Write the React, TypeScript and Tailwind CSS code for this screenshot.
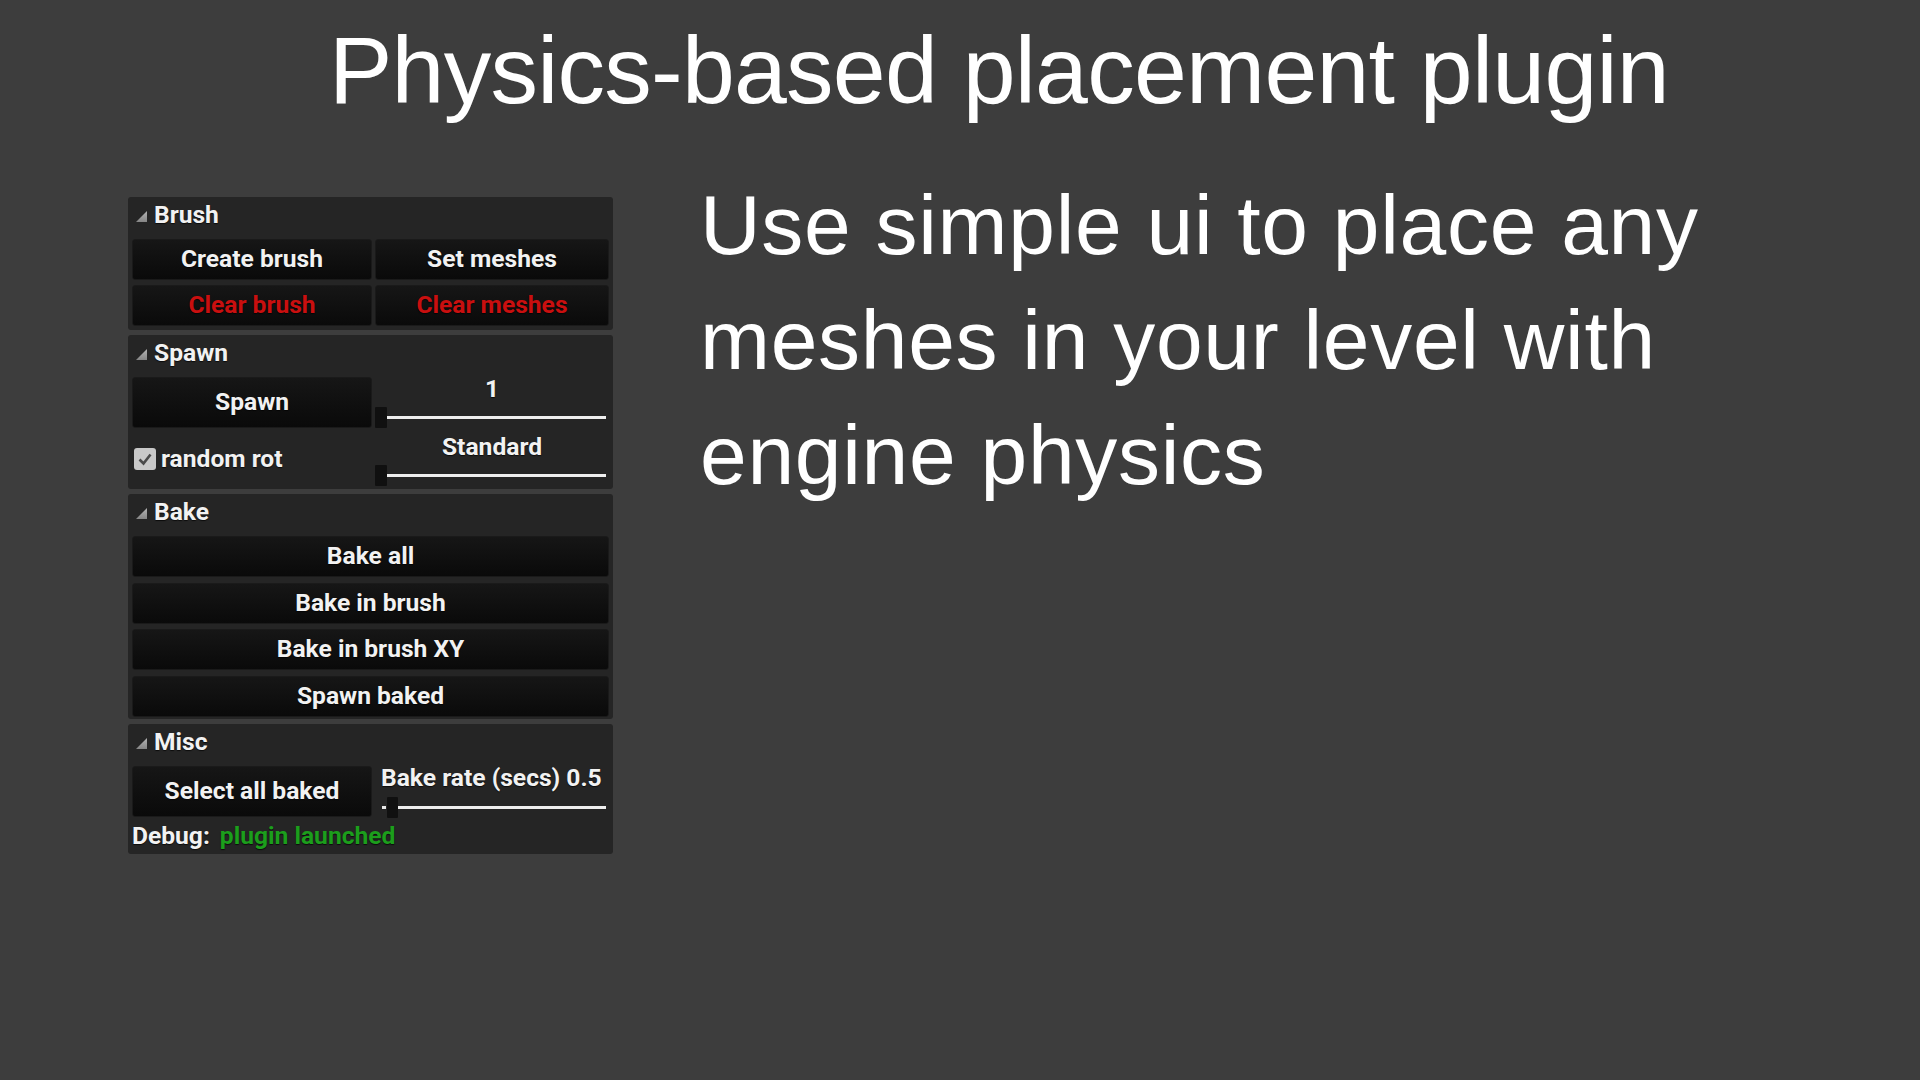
// Slide: plugin panel on the left, pitch text on the right.
import type { ReactNode } from "react";

function Cabecalho({ titulo }: { titulo: string }) {
  return (
    <div className="flex h-[42px] items-start gap-[7px] pl-[8px] pt-[4px]">
      <svg width="11" height="11" viewBox="0 0 11 11" className="mt-[10px] shrink-0">
        <defs>
          <linearGradient id="tri" x1="0" y1="0" x2="0" y2="1">
            <stop offset="0" stopColor="#b4b4b4" />
            <stop offset="1" stopColor="#858585" />
          </linearGradient>
        </defs>
        <polygon points="11,0 11,11 0,11" fill="url(#tri)" />
      </svg>
      <span className="leading-[28px]">{titulo}</span>
    </div>
  );
}

function Botao({ children, vermelho, alto }: { children: ReactNode; vermelho?: boolean; alto?: boolean }) {
  return (
    <div
      className={`flex items-center justify-center rounded-[3px] border border-[#1a1a1a] bg-linear-to-b from-[#161616] to-[#0a0a0a] ${
        alto ? "h-[51px]" : "h-[41px]"
      } ${vermelho ? "text-[#c90f0f]" : "text-[#f2f2f2]"}`}
    >
      {children}
    </div>
  );
}

function Deslizador({ traco }: { traco?: boolean }) {
  return (
    <div className="flex h-[21px] items-center pr-[3px]">
      {traco && <div className="mr-[1px] h-[3px] w-[4px] bg-[#e8e8e8]" />}
      <div className={`h-full shrink-0 rounded-[1px] bg-[#101010] ${traco ? "w-[11px]" : "w-[12px]"}`} />
      <div className="h-[3px] flex-1 bg-[#eeeeee]" />
    </div>
  );
}

export default function App() {
  return (
    <div className="h-[1080px] w-[1920px] overflow-hidden bg-[#3d3d3d] font-['Liberation_Sans',Arial,sans-serif] text-white">
      <h1 className="pl-[329px] pt-[23px] text-[95px] font-normal leading-[95px] tracking-[-0.75px]">
        Physics-based placement plugin
      </h1>

      <div className="mt-[50px] flex items-start pl-[128px]">
        {/* painel do plugin */}
        <div className="mt-[29px] flex w-[485px] flex-col gap-[5px] font-['Roboto',sans-serif] text-[24.6px] font-bold text-[#f2f2f2] [text-shadow:0_1px_1px_rgba(0,0,0,0.7)]">
          <section className="rounded-[3px] bg-[#252525] px-[4px] pb-[4px]">
            <div className="-mx-[4px]">
              <Cabecalho titulo="Brush" />
            </div>
            <div className="grid grid-cols-[240px_1fr] gap-x-[3px] gap-y-[5px]">
              <Botao>Create brush</Botao>
              <Botao>Set meshes</Botao>
              <Botao vermelho>Clear brush</Botao>
              <Botao vermelho>Clear meshes</Botao>
            </div>
          </section>

          <section className="rounded-[3px] bg-[#252525] px-[4px] pb-[3px]">
            <div className="-mx-[4px]">
              <Cabecalho titulo="Spawn" />
            </div>
            <div className="grid grid-cols-[240px_1fr] gap-x-[3px]">
              <div>
                <Botao alto>Spawn</Botao>
                <label className="ml-[2px] mt-[20px] flex h-[22px] items-center gap-[5px]">
                  <span className="flex h-[22px] w-[22px] items-center justify-center rounded-[3px] bg-[#c9c9c9]">
                    <svg width="16" height="16" viewBox="0 0 16 16">
                      <path d="M2.5 8.5 L6.5 12.5 L13.5 3.5" fill="none" stroke="#4a4a4a" strokeWidth="2.6" />
                    </svg>
                  </span>
                  <span className="leading-[24px]">random rot</span>
                </label>
              </div>
              <div>
                <div className="h-[24px] text-center leading-[24px]">1</div>
                <div className="mt-[6px]">
                  <Deslizador />
                </div>
                <div className="mt-[7px] h-[24px] text-center leading-[24px]">Standard</div>
                <div className="mt-[6px]">
                  <Deslizador />
                </div>
              </div>
            </div>
          </section>

          <section className="rounded-[3px] bg-[#252525] px-[4px] pb-[2.5px]">
            <div className="-mx-[4px]">
              <Cabecalho titulo="Bake" />
            </div>
            <div className="flex flex-col gap-[5.5px]">
              <Botao>Bake all</Botao>
              <Botao>Bake in brush</Botao>
              <Botao>Bake in brush XY</Botao>
              <Botao>Spawn baked</Botao>
            </div>
          </section>

          <section className="rounded-[3px] bg-[#252525] px-[4px] pb-[6px]">
            <div className="-mx-[4px]">
              <Cabecalho titulo="Misc" />
            </div>
            <div className="grid grid-cols-[240px_1fr] gap-x-[3px]">
              <Botao alto>Select all baked</Botao>
              <div className="pl-[6px]">
                <div className="h-[24px] whitespace-nowrap leading-[24px]">Bake rate (secs) 0.5</div>
                <div className="mt-[7px] pl-[1px]">
                  <Deslizador traco />
                </div>
              </div>
            </div>
            <div className="mt-[6px] flex h-[24px] gap-[10px] leading-[24px]">
              <span>Debug:</span>
              <span className="text-[#1c9e1c]">plugin launched</span>
            </div>
          </section>
        </div>

        {/* texto de apresentação */}
        <p className="ml-[87px] text-[84px] leading-[115px] tracking-[0.7px]">
          <span className="block">Use simple ui to place any</span>
          <span className="block">meshes in your level with</span>
          <span className="block">engine physics</span>
        </p>
      </div>
    </div>
  );
}
